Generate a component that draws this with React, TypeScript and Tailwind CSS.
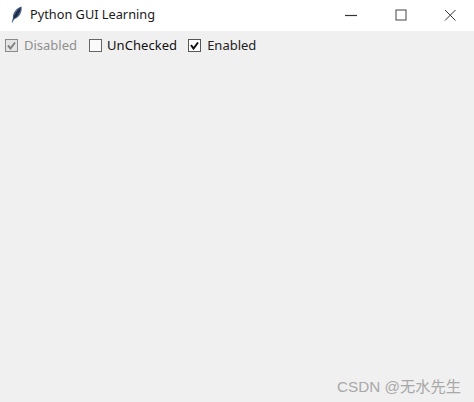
export default function App() {
  return (
    <div className="w-[474px] h-[402px] flex flex-col bg-[#f0f0f0] overflow-hidden" style={{ fontFamily: '"Noto Sans", "Noto Sans CJK SC", sans-serif' }}>
      <div className="h-[31px] bg-white flex items-center shrink-0">
        <svg width="12" height="17" viewBox="0 0 12 17" className="ml-[11px] -mt-[2px]">
          <path d="M0.8 16.5 C1 14.5 1.4 13.2 2 12 C1.2 7.5 5 2 10.5 0.5 C11.5 5.5 9 11 4 12.8 C3 13.8 2 15.2 1.6 16.5 Z" fill="#51698f" />
          <path d="M2.2 12.5 C3 8.5 6 4 10.2 1 C9 6 7 10 3.5 12.6 Z" fill="#1c2a45" />
        </svg>
        <span className="ml-[7px] text-[12.75px] leading-none text-[#1a1a1a] -mt-[2px]">Python GUI Learning</span>
        <div className="ml-auto flex items-center -mt-[1px]">
          <svg width="12" height="12" viewBox="0 0 12 12" className="mr-[38px]">
            <path d="M0 6.5H12" stroke="#333" strokeWidth="1.2" />
          </svg>
          <svg width="12" height="12" viewBox="0 0 12 12" className="mr-[37px]">
            <rect x="1" y="1" width="10" height="10" fill="none" stroke="#444" strokeWidth="1" />
          </svg>
          <svg width="12" height="12" viewBox="0 0 12 12" className="mr-[18px]">
            <path d="M1 1L11.5 11.5M11.5 1L1 11.5" stroke="#333" strokeWidth="1" />
          </svg>
        </div>
      </div>
      <div className="flex items-center h-[28px] pl-[5px] text-[13px] leading-none shrink-0">
        <svg width="13" height="13" viewBox="0 0 13 13">
          <rect x="0.5" y="0.5" width="12" height="12" fill="#e4e4e4" stroke="#8a8a8a" />
          <path d="M3 6.5L5.5 9.5L10 3.5" fill="none" stroke="#808080" strokeWidth="2" />
        </svg>
        <span className="ml-[6px] text-[#8f8f8f]">Disabled</span>
        <svg width="13" height="13" viewBox="0 0 13 13" className="ml-[12px]">
          <rect x="0.5" y="0.5" width="12" height="12" fill="#fafafa" stroke="#666" />
        </svg>
        <span className="ml-[5px] text-[#111] tracking-[0.05px]">UnChecked</span>
        <svg width="13" height="13" viewBox="0 0 13 13" className="ml-[11px]">
          <rect x="0.5" y="0.5" width="12" height="12" fill="#fff" stroke="#555" />
          <path d="M3 6L5.5 9.5L10 3.5" fill="none" stroke="#111" strokeWidth="2" />
        </svg>
        <span className="ml-[6px] text-[#222]">Enabled</span>
      </div>
      <div className="flex-1 flex items-end justify-end pr-[13px] pb-[8px]">
        <span className="text-[15.25px] leading-none text-[#a8a8a8]" style={{ fontFamily: '"Liberation Sans", "Noto Sans CJK SC", sans-serif' }}>CSDN @无水先生</span>
      </div>
    </div>
  );
}
